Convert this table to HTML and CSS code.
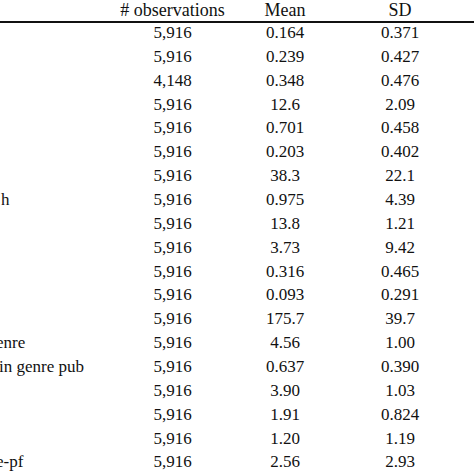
FILE: index.html
```html
<!DOCTYPE html>
<html>
<head>
<meta charset="utf-8">
<link rel="stylesheet" href="styles.css">
</head>
<body>
<table class="stats">
  <colgroup>
    <col class="c-label"><col class="c-obs"><col class="c-mean"><col class="c-sd">
  </colgroup>
  <thead>
    <tr><th></th><th># observations</th><th>Mean</th><th class="sd">SD</th></tr>
  </thead>
  <tbody>
    <tr><td class="lbl"></td><td>5,916</td><td>0.164</td><td class="sd">0.371</td></tr>
    <tr><td class="lbl"></td><td>5,916</td><td>0.239</td><td class="sd">0.427</td></tr>
    <tr><td class="lbl"></td><td>4,148</td><td>0.348</td><td class="sd">0.476</td></tr>
    <tr><td class="lbl"></td><td>5,916</td><td>12.6</td><td class="sd">2.09</td></tr>
    <tr><td class="lbl"></td><td>5,916</td><td>0.701</td><td class="sd">0.458</td></tr>
    <tr><td class="lbl"></td><td>5,916</td><td>0.203</td><td class="sd">0.402</td></tr>
    <tr><td class="lbl"></td><td>5,916</td><td>38.3</td><td class="sd">22.1</td></tr>
    <tr><td class="lbl"><span class="cut-h">h</span></td><td>5,916</td><td>0.975</td><td class="sd">4.39</td></tr>
    <tr><td class="lbl"></td><td>5,916</td><td>13.8</td><td class="sd">1.21</td></tr>
    <tr><td class="lbl"></td><td>5,916</td><td>3.73</td><td class="sd">9.42</td></tr>
    <tr><td class="lbl"></td><td>5,916</td><td>0.316</td><td class="sd">0.465</td></tr>
    <tr><td class="lbl"></td><td>5,916</td><td>0.093</td><td class="sd">0.291</td></tr>
    <tr><td class="lbl"></td><td>5,916</td><td>175.7</td><td class="sd">39.7</td></tr>
    <tr><td class="lbl"><span class="cut-e">enre</span></td><td>5,916</td><td>4.56</td><td class="sd">1.00</td></tr>
    <tr><td class="lbl"><span class="cut-i">in genre pub</span></td><td>5,916</td><td>0.637</td><td class="sd">0.390</td></tr>
    <tr><td class="lbl"></td><td>5,916</td><td>3.90</td><td class="sd">1.03</td></tr>
    <tr><td class="lbl"></td><td>5,916</td><td>1.91</td><td class="sd">0.824</td></tr>
    <tr><td class="lbl"></td><td>5,916</td><td>1.20</td><td class="sd">1.19</td></tr>
    <tr><td class="lbl"><span class="cut-e">e-pf</span></td><td>5,916</td><td>2.56</td><td class="sd">2.93</td></tr>
  </tbody>
</table>
</body>
</html>
```

FILE: styles.css
```css
html, body {
  margin: 0;
  padding: 0;
  background: #fff;
  height: 474px;
  overflow: hidden;
}
.stats {
  width: 474px;
  border-collapse: collapse;
  table-layout: fixed;
  font-family: "Liberation Serif", "Times New Roman", serif;
  color: #111;
}
.c-label { width: 115px; }
.c-obs { width: 115px; }
.c-mean { width: 110px; }
.c-sd { width: 134px; }
.stats th {
  font-weight: normal;
  font-size: 18px;
  line-height: 21px;
  height: 21px;
  padding: 0;
  text-align: center;
  border-bottom: 2px solid #111;
  white-space: nowrap;
}
.stats td {
  font-size: 17px;
  line-height: 19.86px;
  padding: 0 0 4px 0;
  text-align: center;
  white-space: nowrap;
}
.stats .sd { padding-right: 14px; }
.stats td.lbl {
  text-align: left;
  overflow: hidden;
}
.cut-h { margin-left: 1px; }
.cut-e { margin-left: -4px; }
.cut-i { margin-left: -1px; }
```
